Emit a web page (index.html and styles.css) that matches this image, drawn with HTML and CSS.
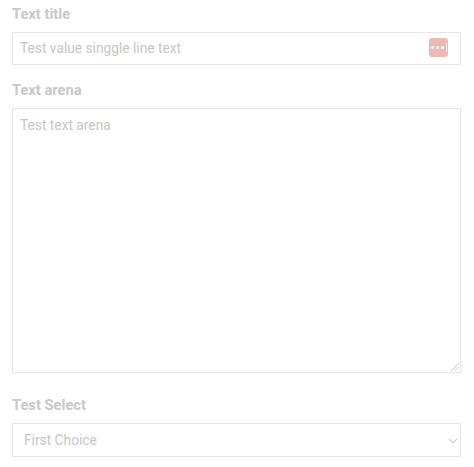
FILE: index.html
```html
<!DOCTYPE html>
<html lang="en">
<head>
<meta charset="utf-8">
<title>Form</title>
<link rel="stylesheet" href="styles.css">
</head>
<body>
<form class="form">
  <label class="label" for="title">Text title</label>
  <div class="control">
    <input class="field input" id="title" type="text" value="Test value singgle line text">
    <span class="badge" aria-hidden="true">
      <svg width="19" height="19" viewBox="0 0 19 19"><rect width="19" height="19" rx="3" fill="#ebbab5"/><g fill="#fbeeec"><rect x="2" y="8" width="3" height="3" rx="1"/><rect x="7" y="8" width="3" height="3" rx="1"/><rect x="12" y="8" width="3" height="3" rx="1"/><rect x="17" y="5" width="1" height="9"/></g></svg>
    </span>
  </div>
  <label class="label label-area" for="arena">Text arena</label>
  <div class="control">
    <textarea class="field area" id="arena">Test text arena</textarea>
    <svg class="grip" width="10" height="10" viewBox="0 0 10 10" aria-hidden="true"><path d="M1 9l8-8M5 9l4-4" fill="none" stroke="#c8c8c8" stroke-width="1"/></svg>
  </div>
  <label class="label label-select" for="choice">Test Select</label>
  <div class="control">
    <select class="field select" id="choice"><option>First Choice</option></select>
    <svg class="chevron" width="10" height="6" viewBox="0 0 10 6" aria-hidden="true"><path d="M1 1l4 4 4-4" fill="none" stroke="#cfcfcf" stroke-width="1.1"/></svg>
  </div>
</form>
</body>
</html>
```
FILE: styles.css
```css
html, body { margin: 0; padding: 0; background: #fff; }
body { font-family: Roboto, "Liberation Sans", sans-serif; width: 474px; height: 467px; overflow: hidden; }
.form { display: flex; flex-direction: column; padding: 5px 13px 0 12px; }
.label { font-size: 14.7px; font-weight: 700; line-height: 18px; color: #c8c8c8; }
.label-area { margin-top: 16px; }
.label-select { margin-top: 23px; }
.control { position: relative; margin-top: 9px; display: flex; }
.field {
  box-sizing: border-box; width: 100%; margin: 0; border: 1px solid #e6e6e6; border-radius: 0;
  background: #fff; color: #c6c6c6; font-family: Roboto, "Liberation Sans", sans-serif;
  font-size: 13.75px; outline: none;
}
.input { height: 33px; padding: 0 7px 2px; }
.area { display: block; height: 265px; padding: 8px 7px; line-height: 16px; resize: none; }
.select { height: 34px; padding: 0 11px; appearance: none; -webkit-appearance: none; border-radius: 0; }
.badge { position: absolute; right: 13px; top: 6px; width: 19px; height: 19px; display: flex; }
.grip { position: absolute; right: 1px; bottom: 1px; }
.chevron { position: absolute; right: 3px; top: 15px; }
```
